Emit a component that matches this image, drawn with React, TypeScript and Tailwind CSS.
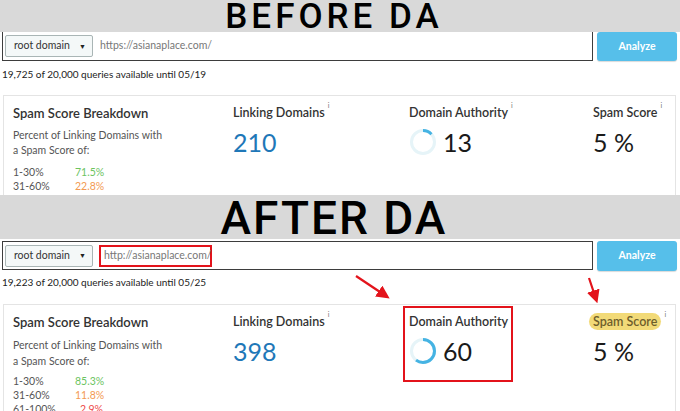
import React from 'react'

type Row = { range: string; value: string; color: string }

interface SectionProps {
  after?: boolean
  heading: string
  url: string
  queries: string
  rows: Row[]
  linking: string
  da: number
}

function Info() {
  return <sup className="ml-[3px] text-[7px] text-[#777] font-normal align-super">i</sup>
}

function Ring({ pct }: { pct: number }) {
  const r = 11.5
  const c = 2 * Math.PI * r
  return (
    <svg width="28" height="28" viewBox="0 0 28 28" className="shrink-0">
      <circle cx="14" cy="14" r={r} fill="none" stroke="#e6f4f8" strokeWidth="3" />
      <circle
        cx="14"
        cy="14"
        r={r}
        fill="none"
        stroke="#45b3e3"
        strokeWidth="3"
        strokeDasharray={`${(c * pct) / 100} ${c}`}
        transform="rotate(-90 14 14)"
      />
    </svg>
  )
}

function Section({ after, heading, url, queries, rows, linking, da }: SectionProps) {
  return (
    <section className={after ? 'h-[216px] overflow-hidden' : 'h-[195px] overflow-hidden'}>
      <div className={`${after ? 'h-[44px]' : 'h-[32px]'} bg-[#d9d9d9] flex items-center justify-center`}>
        <h1
          className={`${
            after ? 'text-[46px] leading-[44px] tracking-[2px] mt-[1px]' : 'text-[35px] leading-[32px] tracking-[4px] mt-[1px]'
          } font-medium text-black font-['Roboto','Liberation_Sans',sans-serif] mr-[12px]`}
        >
          {heading}
        </h1>
      </div>

      <div className={`flex items-start pl-[2px] ${after ? 'mt-[2px]' : ''}`}>
        <div
          className={`w-[591px] h-[29px] border border-[#3d3d3d] ${
            after ? '' : 'border-t-0'
          } flex items-center pl-[2px] bg-white`}
        >
          <div className="w-[88px] h-[22px] border border-[#a9b5b5] rounded-[2px] bg-[#f4f8f8] flex items-center pl-[8px] text-[10.5px] text-[#333]">
            root domain
            <span className="ml-[9px] text-[7px] text-[#222]">▼</span>
          </div>
          {after ? (
            <div className="ml-[6px] h-[22px] w-[113px] border-2 border-[#e3131b] flex items-center pl-[3px] text-[10.5px] text-[#777]">
              {url}
            </div>
          ) : (
            <div className="ml-[7px] text-[10.5px] text-[#777]">{url}</div>
          )}
        </div>
        <button
          className={`ml-[4px] w-[80px] ${
            after ? 'h-[30px]' : 'h-[29px]'
          } rounded-[3px] bg-[#56bfea] text-white text-[10.5px] font-bold shadow-[0_1px_1px_rgba(0,0,0,0.15)]`}
        >
          Analyze
        </button>
      </div>

      <p className={`${after ? 'mt-[4px]' : 'mt-[6px]'} pl-[2px] text-[10px] leading-[14px] text-[#222]`}>
        {queries}
      </p>

      <div
        className={`${
          after ? 'mt-[15px]' : 'mt-[14px]'
        } ml-[3px] w-[673px] h-[140px] border border-[#e4e4e4] flex pt-[9px] pl-[9px] text-[#333]`}
      >
        <div className="w-[220px]">
          <div className="text-[13px] leading-[16px] font-semibold text-[#333]">Spam Score Breakdown</div>
          <div
            className={`${
              after ? 'mt-[7px] leading-[16px]' : 'mt-[7px] leading-[15px]'
            } text-[10.5px] text-[#555]`}
          >
            Percent of Linking Domains with
            <br />a Spam Score of:
          </div>
          <div className={`${after ? 'mt-[5px]' : 'mt-[7px]'} text-[10.5px] leading-[14px]`}>
            {rows.map((r) => (
              <div key={r.range} className="flex">
                <span className="w-[62px] text-[#555]">{r.range}</span>
                <span className={`w-[28px] text-right ${r.color}`}>{r.value}</span>
              </div>
            ))}
          </div>
        </div>

        <div className="w-[176px]">
          <div className="text-[12.5px] leading-[16px] font-semibold text-[#333]">
            Linking Domains
            <Info />
          </div>
          <div className="mt-[6px] text-[25px] leading-[30px] text-[#1f78b8]">{linking}</div>
        </div>

        <div className="w-[184px] relative">
          {after && <div className="absolute left-[-6px] top-[-8px] w-[110px] h-[76px] border-2 border-[#e3131b]" />}
          <div className="text-[12.5px] leading-[16px] font-semibold text-[#333]">
            Domain Authority
            {!after && <Info />}
          </div>
          <div className="mt-[6px] flex items-center gap-[6px] h-[30px]">
            <Ring pct={da} />
            <span className="text-[25px] leading-[30px] text-[#1a1a1a]">{da}</span>
          </div>
        </div>

        <div className="flex-1">
          <div className="text-[12.5px] leading-[16px] font-semibold text-[#333]">
            {after ? (
              <span className="-ml-[4px] px-[4px] py-[1px] rounded-full bg-[#f2da78] text-[#6e5e2c]">Spam Score</span>
            ) : (
              'Spam Score'
            )}
            <Info />
          </div>
          <div className="mt-[6px] text-[25px] leading-[30px] text-[#1a1a1a]">5 %</div>
        </div>
      </div>
    </section>
  )
}

export default function App() {
  return (
    <div className="relative w-[680px] h-[411px] overflow-hidden bg-white font-['Lato','Liberation_Sans',sans-serif]">
      <Section
        heading="BEFORE DA"
        url="https://asianaplace.com/"
        queries="19,725 of 20,000 queries available until 05/19"
        rows={[
          { range: '1-30%', value: '71.5%', color: 'text-[#6cc45f]' },
          { range: '31-60%', value: '22.8%', color: 'text-[#f39a52]' },
        ]}
        linking="210"
        da={13}
      />
      <Section
        after
        heading="AFTER DA"
        url="http://asianaplace.com/"
        queries="19,223 of 20,000 queries available until 05/25"
        rows={[
          { range: '1-30%', value: '85.3%', color: 'text-[#6cc45f]' },
          { range: '31-60%', value: '11.8%', color: 'text-[#f39a52]' },
          { range: '61-100%', value: '2.9%', color: 'text-[#ee4b4b]' },
        ]}
        linking="398"
        da={60}
      />

      <svg className="absolute left-0 top-0 pointer-events-none" width="680" height="411">
        <defs>
          <marker id="head" markerWidth="6" markerHeight="6" refX="4" refY="3" orient="auto" markerUnits="strokeWidth">
            <path d="M0,0 L6,3 L0,6 Z" fill="#e3131b" />
          </marker>
        </defs>
        <line x1="356" y1="276" x2="386" y2="296" stroke="#e3131b" strokeWidth="2.2" markerEnd="url(#head)" />
        <line x1="589" y1="278" x2="596" y2="299" stroke="#e3131b" strokeWidth="2.2" markerEnd="url(#head)" />
      </svg>
    </div>
  )
}
